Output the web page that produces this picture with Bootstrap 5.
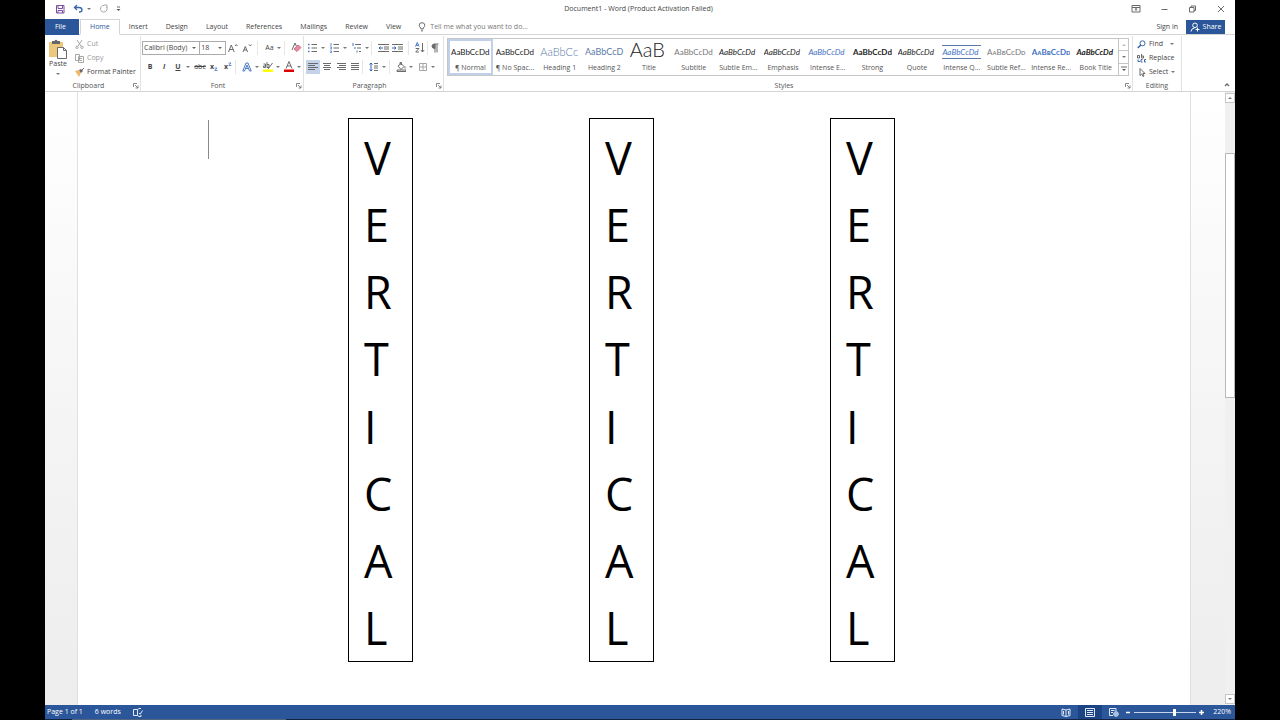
<!DOCTYPE html>
<html lang="en">
<head>
<meta charset="utf-8">
<meta name="viewport" content="width=device-width, initial-scale=1">
<title>Document1 - Word</title>
<link href="https://cdn.jsdelivr.net/npm/bootstrap@5.3.0/dist/css/bootstrap.min.css" rel="stylesheet">
<script src="https://cdn.jsdelivr.net/npm/bootstrap@5.3.0/dist/js/bootstrap.bundle.min.js"></script>
<style>
:root { --word: #2b579a; --line: #d4d4d4; --ink: #444; }
body { font: 7px/10px "Open Sans", "Noto Sans", sans-serif; color: var(--ink); background: #000; padding: 0 45px; }
button, select, input { font: inherit; color: inherit; }
button { border: 0; background: none; padding: 0; white-space: nowrap; display: inline-flex; align-items: center; }
svg { display: block; flex: none; fill: none; stroke: #6a6a6a; }
a { color: inherit; text-decoration: none; }
.s-purple { stroke: #7b4fa0; }
.s-blue { stroke: #3766ad; }
.s-sky { stroke: #4a7ac0; }
.s-pale { stroke: #a6a6a6; }
.app-window { background: #fff; }
.title-bar { height: 19px; padding: 0 9px 2px 10px; }
.title-side { flex: 1 1 0; }
.quick { gap: 8px; }
.win-controls { gap: 19px; }
.tab-row { height: 16px; border-bottom: 1px solid var(--line); }
.tab-row .ribbon-tab { padding: 0 9px; height: 16px; display: flex; align-items: center; }
.tab-row .file-tab { background: var(--word); color: #fff; width: 34px; padding: 0 3px 0 0; justify-content: center; margin-right: 1px; }
.tab-row .home-tab { color: var(--word); border: 1px solid var(--line); border-bottom-color: #fff; background: #fff; }
.tell { border: 0; outline: 0; padding: 0; width: 120px; height: 12px; background: none; }
.tell::placeholder { color: #777; opacity: 1; }
.share-btn { background: var(--word); color: #fff; height: 14px; width: 39px; justify-content: center; gap: 3px; margin-right: 10px; }
.share-btn svg { stroke: #fff; }
.ribbon { height: 57px; border-bottom: 1px solid var(--line); }
.tool-group { border-right: 1px solid #e2e2e2; margin-top: 1px; position: relative; }
.group-name { height: 10px; text-align: center; margin-top: auto; color: #555; }
.launcher { position: absolute; right: 1px; bottom: 2px; }
.clip-group { width: 96px; }
.font-group { width: 163px; }
.para-group { width: 140px; }
.edit-group { width: 49px; }
.ribbon-end { width: 53px; }
.stack { padding-top: 1px; }
.stack button { height: 14px; gap: 3px; }
.paste-btn { width: 26px; flex-direction: column; padding-top: 3px; }
.off { color: #999; }
.tool-rows { padding: 2px 0 0 2px; }
.tool-row { height: 19px; }
.tool-row button { width: 14px; height: 14px; justify-content: center; }
.tool-row .with-caret { width: 22px; justify-content: flex-start; padding-left: 2px; }
.tool-row .with-caret-s { width: 21px; justify-content: flex-start; padding-left: 2px; }
.with-caret > :first-child, .with-caret-s > :first-child { width: 10px; text-align: center; margin-right: 3px; }
.pressed { background: #c5d3ea; }
.caret-down { width: 0; height: 0; border: 2px solid transparent; border-top-color: #777; border-bottom: 0; flex: none; }
.rule { width: 1px; height: 14px; background: #e6e6e6; flex: none; }
.pick { appearance: none; border: 1px solid #ababab; border-radius: 0; height: 14px; padding: 0 0 0 1px; line-height: 10px;
  background: #fff url("data:image/svg+xml,%3Csvg xmlns='http://www.w3.org/2000/svg' width='4' height='2'%3E%3Cpath d='M0 0h4L2 2z' fill='%23666'/%3E%3C/svg%3E") no-repeat right 3px center; }
.pick-font { width: 59px; margin-left: -1px; }
.pick-size { width: 27px; margin-left: -1px; }
.gallery { border: 1px solid #c6c6c6; height: 38px; margin: 2px 3px 0; }
.style-item { flex: 1 1 0; min-width: 0; height: 36px; flex-direction: column; padding: 0 3px; }
.style-item.chosen { box-shadow: inset 0 0 0 2px #c0d0ea; }
.sample { font: 8px/26px Lato, sans-serif; height: 24px; width: 100%; overflow: hidden; text-align: left; color: #222; }
.style-item .caption { line-height: 10px; color: #555; }
.sample-h1 { font-size: 11px; color: #5b7aa8; font-weight: 300; }
.sample-h2 { font-size: 9px; color: #5b7aa8; }
.sample-title { font-size: 20px; line-height: 20px; font-weight: 300; overflow: visible; }
.ink-grey { color: #777; }
.ink-blue { color: #4472c4; }
.lined { height: 14px; line-height: 12px; margin: 6px 0 4px; border: solid #5b7aa8; border-width: 1px 0; }
.gallery-nav { width: 10px; border-left: 1px solid #c6c6c6; }
.gallery-nav button { flex: 1; justify-content: center; border-bottom: 1px solid #c6c6c6; }
.gallery-nav button:last-child { border-bottom: 0; }
.desk { background: linear-gradient(#fff, #f4f4f4 55%, #ededed); min-height: 0; }
.paper { margin-left: 32px; margin-right: 34px; background: #fff; border: solid #e0e0e0; border-width: 0 1px; padding: 26px 0 0 130px; }
.text-caret { width: 1px; height: 39px; margin-top: 2px; background: #888; }
.box-set { margin-left: 139px; gap: 176px; }
.tall-box { width: 65px; height: 544px; border: 1px solid #000; padding: 19px 0 13px 15px; font: 45px/40px "Open Sans", "Noto Sans", sans-serif; color: #000; }
.scroll-bar { width: 10px; background: #f0f0f0; padding: 1px 0; }
.scroll-bar button { height: 10px; border: 1px solid #c6c6c6; background: #fff; justify-content: center; }
.scroll-thumb { background: #fff; border: 1px solid #b8b8b8; flex: 244 0 0; }
.track-above { flex: 50 0 0; }
.track-below { flex: 297 0 0; }
.status-bar { height: 14px; background: var(--word); color: #fff; padding: 0 4px 0 2px; }
.status-bar svg { stroke: #dfe8f6; }
.view-btn { width: 24px; height: 14px; justify-content: center; }
.view-btn.pressed { background: #1c4484; }
.zoom-range { appearance: none; width: 62px; height: 9px; background: linear-gradient(#c9d6ea, #c9d6ea) center / 100% 1px no-repeat; margin: 0 3px; }
.zoom-range::-webkit-slider-thumb { appearance: none; width: 3px; height: 7px; background: #fff; border: 0; }
.task-edge { height: 1px; background: linear-gradient(90deg, #14233f 27px, #53647f 27px 241px, #14233f 241px); }
.up { transform: rotate(180deg); }
</style>
</head>
<body class="vh-100 overflow-hidden">
<div class="app-window d-flex flex-column h-100">

  <header class="title-bar d-flex align-items-center">
    <div class="title-side quick d-flex align-items-center">
      <button aria-label="Save"><svg class="s-purple" width="10" height="10"><path d="M1.5 1.5h7.5v7.500h-7.500zM3 1.500v3h4.500v-3M3 9V6.500h4.500V9"/></svg></button>
      <button aria-label="Undo"><svg class="s-blue" width="10" height="9" stroke-width="1.3"><path d="M4 1L1.500 3.500L4 6M1.500 3.500H6Q9 3.500 9 6Q9 8 6 8"/></svg><span class="caret-down ms-1"></span></button>
      <button aria-label="Repeat"><svg class="s-pale" width="9" height="9"><path d="M5 1.500A3.300 3.300 0 1 0 7.500 3M5 1h3v3"/></svg></button>
      <button aria-label="Customize"><svg width="5" height="6"><path d="M1 1h3"/><path d="M.5 3h4L2.500 5z" fill="#555" stroke="none"/></svg></button>
    </div>
    <div class="me-1">Document1 - Word (Product Activation Failed)</div>
    <div class="title-side win-controls d-flex align-items-center justify-content-end">
      <button aria-label="Ribbon options"><svg width="10" height="8"><path d="M1 .5h8v6.500H1zM1 2.500h8M5 6V3.500M3.800 4.500L5 3.500l1.200 1"/></svg></button>
      <button aria-label="Minimize"><svg width="9" height="8"><path d="M1.500 4.500h6"/></svg></button>
      <button aria-label="Restore"><svg width="9" height="8"><path d="M1.500 2.500h4.500v4.500h-4.500zM3 2.500V1h4.500v4.500H6"/></svg></button>
      <button aria-label="Close"><svg width="10" height="8"><path d="M2 1l6 6M8 1L2 7"/></svg></button>
    </div>
  </header>

  <nav class="tab-row d-flex align-items-center flex-shrink-0">
    <a href="#" class="ribbon-tab file-tab">File</a>
    <a href="#" class="ribbon-tab home-tab">Home</a>
    <a href="#" class="ribbon-tab">Insert</a>
    <a href="#" class="ribbon-tab">Design</a>
    <a href="#" class="ribbon-tab">Layout</a>
    <a href="#" class="ribbon-tab">References</a>
    <a href="#" class="ribbon-tab">Mailings</a>
    <a href="#" class="ribbon-tab">Review</a>
    <a href="#" class="ribbon-tab">View</a>
    <label class="d-flex align-items-center ms-2" for="tell"><svg class="me-1" width="8" height="10"><path d="M2.800 7V6Q1 4.700 1.200 3.300A2.800 2.600 0 0 1 6.800 3.300Q6.900 4.700 5.200 6V7zM3 8.800h2"/></svg></label>
    <input class="tell" id="tell" type="text" placeholder="Tell me what you want to do...">
    <a href="#" class="ms-auto me-2">Sign in</a>
    <button class="share-btn"><svg width="10" height="10"><circle cx="5" cy="3.300" r="2.300"/><path d="M1 9.500Q1.500 6 4.500 6M5.500 7.500h4M7.500 5.500v4"/></svg>Share</button>
  </nav>

  <section class="ribbon d-flex flex-shrink-0">
    <div class="tool-group clip-group d-flex flex-column">
      <div class="d-flex">
        <button class="paste-btn"><svg width="20" height="20" stroke="none"><path d="M1 3h14v15H1z" fill="#edc77c" stroke="none"/><path d="M4 5V2h2.500Q8 -.5 9.500 2H12v3z" fill="#666" stroke="none"/><path d="M9.500 8.500h6l3 3v8h-9z" fill="#fff"/><path d="M15.500 8.500v3h3"/></svg><span>Paste</span><span class="caret-down mt-1"></span></button>
        <div class="stack d-flex flex-column ms-1 align-items-start">
          <button class="off"><svg class="s-pale" width="9" height="9"><path d="M2 0l4 6M7 0L3 6"/><circle cx="2" cy="7.300" r="1.200"/><circle cx="7" cy="7.300" r="1.200"/></svg>Cut</button>
          <button class="off"><svg class="s-pale" width="9" height="9"><path d="M.5 .5h4v6h-4zM3.500 2.500h5v6h-5zM5 4.500h2M5 6.500h2"/></svg>Copy</button>
          <button><svg width="9" height="9"><path d="M0 3l4-1 2 3-2 4z" fill="#edb96a" stroke="none"/><path d="M4 2l2-1 2 2-2 2z" fill="#666" stroke="none"/><path d="M7 2l2-2"/></svg>Format Painter</button>
        </div>
      </div>
      <div class="group-name pe-2">Clipboard</div>
      <button class="launcher" aria-label="Clipboard options"><svg width="6" height="6"><path d="M.5 4V.5H4M2 2l3 3M5 2.500V5H2.500" stroke-width=".8"/></svg></button>
    </div>

    <div class="tool-group font-group d-flex flex-column">
      <div class="tool-rows">
        <div class="tool-row d-flex align-items-center">
          <select class="pick pick-font" aria-label="Font"><option>Calibri (Body)</option></select>
          <select class="pick pick-size" aria-label="Font size"><option>18</option></select>
          <button aria-label="Grow font"><svg width="11" height="10"><path d="M1.500 9L4.300 2 7.200 9M2.500 6.500h3.700M8 3l1.300-1.500L10.600 3"/></svg></button>
          <button aria-label="Shrink font"><svg width="11" height="10"><path d="M2 9l2.300-5.500L6.600 9M3 7h2.700M8 1.500L9.300 3l1.300-1.500"/></svg></button>
          <span class="rule mx-1"></span>
          <button class="with-caret" aria-label="Change case"><span>Aa</span><span class="caret-down"></span></button>
          <span class="rule me-1"></span>
          <button aria-label="Clear formatting"><svg width="11" height="11"><path d="M1 8L4 1l1.500 3.500"/><path d="M3 7l4-4 3 2.500-4 4z" fill="#e58ba2" stroke="#d5708a"/></svg></button>
        </div>
        <div class="tool-row d-flex align-items-center">
          <button class="fw-bold">B</button><button class="fst-italic fw-bold">I</button>
          <button class="with-caret text-decoration-underline fw-bold"><span>U</span><span class="caret-down"></span></button>
          <button class="text-decoration-line-through">abc</button>
          <button aria-label="Subscript"><b>x</b><svg width="4" height="10"><path d="M.5 6h2.500L.8 8.500H3.500" stroke="#4472c4" stroke-width=".8"/></svg></button>
          <button aria-label="Superscript"><b>x</b><svg width="4" height="10"><path d="M.5 1h2.500L.8 3.500H3.500" stroke="#4472c4" stroke-width=".8"/></svg></button>
          <span class="rule"></span>
          <button class="with-caret-s ms-1" aria-label="Text effects"><svg class="s-sky" width="10" height="10"><path d="M.8 9L4 1h2l3.200 8H7.500L5 3 2.500 9zM3.500 6.500h3"/></svg><span class="caret-down"></span></button>
          <button class="with-caret-s" aria-label="Highlight"><svg width="10" height="11"><path d="M0 8.500h10v2.500H0z" fill="#ff0" stroke="none"/><path d="M.5 3h2v3.500h-2V5h2M4 1v5.500h2V3.500H4M5 8L9.500 2"/></svg><span class="caret-down"></span></button>
          <button class="with-caret-s" aria-label="Font color"><svg width="10" height="11"><path d="M0 8.500h10v2.500H0z" fill="#e00000" stroke="none"/><path d="M2 7.500L5 .5l3 7M3 5h4"/></svg><span class="caret-down"></span></button>
        </div>
      </div>
      <div class="group-name pe-2">Font</div>
      <button class="launcher" aria-label="Font options"><svg width="6" height="6"><path d="M.5 4V.5H4M2 2l3 3M5 2.500V5H2.500" stroke-width=".8"/></svg></button>
    </div>

    <div class="tool-group para-group d-flex flex-column">
      <div class="tool-rows">
        <div class="tool-row d-flex align-items-center">
          <button class="with-caret" aria-label="Bullets"><svg width="10" height="10"><path d="M0 1.500h1.500M0 5h1.500M0 8.500h1.500" stroke="#4472c4" stroke-width="1.500"/><path d="M3.500 1.500H9M3.500 5H9M3.500 8.500H9"/></svg><span class="caret-down"></span></button>
          <button class="with-caret" aria-label="Numbering"><svg width="10" height="10"><path d="M1 0v3M0 4h1.500v1L.5 6H2M0 8h1.500v1.500H0" stroke="#4472c4" stroke-width=".8"/><path d="M3.500 1.500H9M3.500 5H9M3.500 8.500H9"/></svg><span class="caret-down"></span></button>
          <button class="with-caret-s" aria-label="Multilevel list"><svg width="10" height="10"><path d="M1 0v3M3 4v2M5 7.500v2" stroke="#4472c4"/><path d="M3 1.500h6M5 5h4M7 8.500h2"/></svg><span class="caret-down"></span></button>
          <span class="rule me-1"></span>
          <button aria-label="Decrease indent"><svg width="11" height="10"><path d="M0 1.500h11M6 4h5M6 6h5M0 8.500h11"/><path d="M5 5H1M2.500 3.500L1 5l1.500 1.500" stroke="#2f62b5"/></svg></button>
          <button aria-label="Increase indent"><svg width="11" height="10"><path d="M0 1.500h11M6 4h5M6 6h5M0 8.500h11"/><path d="M0 5h4M2.500 3.500L4 5 2.500 6.500" stroke="#2f62b5"/></svg></button>
          <span class="rule ms-1"></span>
          <button class="ms-1" aria-label="Sort"><svg width="10" height="11"><path d="M.5 4.500L2.300.5l1.800 4M1 3.300h2.500" stroke="#4472c4"/><path d="M.7 6.500H4L.7 10H4M7.500 1v9M5.800 8l1.700 2L9.200 8"/></svg></button>
          <span class="rule"></span>
          <button aria-label="Show marks"><svg width="8" height="10"><path d="M4 1.500v8M6 1.500v8M3.500 1h4"/><path d="M4 1Q1 1 1 3.200T4 5.500z" fill="#6a6a6a"/></svg></button>
        </div>
        <div class="tool-row d-flex align-items-center">
          <button class="pressed" aria-label="Align left"><svg width="10" height="9"><path d="M0 1.500h10M0 3.500h7M0 5.500h10M0 7.500h7"/></svg></button>
          <button aria-label="Center"><svg width="10" height="9"><path d="M1 1.500h8M2 3.500h6M1 5.500h8M2 7.500h6"/></svg></button>
          <button aria-label="Align right"><svg width="10" height="9"><path d="M1 1.500h9M3 3.500h7M1 5.500h9M3 7.500h7"/></svg></button>
          <button aria-label="Justify"><svg width="10" height="9"><path d="M1 1.500h8M1 3.500h8M1 5.500h8M1 7.500h8"/></svg></button>
          <span class="rule me-1"></span>
          <button class="with-caret" aria-label="Line spacing"><svg width="10" height="10"><path d="M2 1v8M.5 2.500L2 1l1.500 1.500M.5 7.500L2 9l1.500-1.500" stroke="#2f62b5"/><path d="M5 1.500h4M5 4h4M5 6h4M5 8.500h4"/></svg><span class="caret-down"></span></button>
          <span class="rule me-1"></span>
          <button class="with-caret" aria-label="Shading"><svg width="11" height="10"><path d="M2 4l3-2.500L8 4.500 5 7.500zM4 3V.5h1.500V3M9 4.500v2M1 8h9v1.500H1z"/></svg><span class="caret-down"></span></button>
          <button class="with-caret" aria-label="Borders"><svg class="s-pale" width="10" height="10"><path d="M1.500 1.500h7v7h-7zM5 1.500v7M1.500 5h7"/></svg><span class="caret-down"></span></button>
        </div>
      </div>
      <div class="group-name pe-2">Paragraph</div>
      <button class="launcher" aria-label="Paragraph options"><svg width="6" height="6"><path d="M.5 4V.5H4M2 2l3 3M5 2.500V5H2.500" stroke-width=".8"/></svg></button>
    </div>

    <div class="tool-group flex-fill d-flex flex-column">
      <div class="gallery d-flex">
        <button class="style-item chosen"><span class="sample">AaBbCcDd</span><span class="caption">¶ Normal</span></button>
        <button class="style-item"><span class="sample">AaBbCcDd</span><span class="caption">¶ No Spac...</span></button>
        <button class="style-item"><span class="sample sample-h1">AaBbCc</span><span class="caption">Heading 1</span></button>
        <button class="style-item"><span class="sample sample-h2">AaBbCcD</span><span class="caption">Heading 2</span></button>
        <button class="style-item"><span class="sample sample-title">AaB</span><span class="caption">Title</span></button>
        <button class="style-item"><span class="sample ink-grey">AaBbCcDd</span><span class="caption">Subtitle</span></button>
        <button class="style-item"><span class="sample fst-italic">AaBbCcDd</span><span class="caption">Subtle Em...</span></button>
        <button class="style-item"><span class="sample fst-italic">AaBbCcDd</span><span class="caption">Emphasis</span></button>
        <button class="style-item"><span class="sample fst-italic ink-blue">AaBbCcDd</span><span class="caption">Intense E...</span></button>
        <button class="style-item"><span class="sample fw-bold">AaBbCcDd</span><span class="caption">Strong</span></button>
        <button class="style-item"><span class="sample fst-italic">AaBbCcDd</span><span class="caption">Quote</span></button>
        <button class="style-item"><span class="sample fst-italic ink-blue lined">AaBbCcDd</span><span class="caption">Intense Q...</span></button>
        <button class="style-item"><span class="sample ink-grey">AᴀBʙCᴄDᴅ</span><span class="caption">Subtle Ref...</span></button>
        <button class="style-item"><span class="sample fw-bold ink-blue">AᴀBʙCᴄDᴅ</span><span class="caption">Intense Re...</span></button>
        <button class="style-item"><span class="sample fst-italic fw-bold">AaBbCcDd</span><span class="caption">Book Title</span></button>
        <div class="gallery-nav d-flex flex-column">
          <button aria-label="Scroll up"><span class="caret-down up opacity-50"></span></button>
          <button aria-label="Scroll down"><span class="caret-down"></span></button>
          <button aria-label="More styles"><svg width="6" height="6"><path d="M0 1h6"/><path d="M1 3h4L3 5z" fill="#555" stroke="none"/></svg></button>
        </div>
      </div>
      <div class="group-name pe-2">Styles</div>
      <button class="launcher" aria-label="Styles options"><svg width="6" height="6"><path d="M.5 4V.5H4M2 2l3 3M5 2.500V5H2.500" stroke-width=".8"/></svg></button>
    </div>

    <div class="tool-group edit-group d-flex flex-column">
      <div class="stack d-flex flex-column ps-1 align-items-start">
        <button><svg class="s-blue" width="9" height="9"><circle cx="5.500" cy="3.300" r="2.500"/><path d="M3.800 5L.8 8" stroke-width="1.500"/></svg>Find<span class="caret-down ms-1"></span></button>
        <button><svg width="9" height="9"><path d="M.5 1.500h2v2.500h-2zM4.500 0v4h2V2h-2"/><path d="M1 5.500v2h2M5.500 5.500H4v2.500h1.500M9 5.500H7.500v2.500H9" stroke="#3766ad"/></svg>Replace</button>
        <button><svg width="9" height="9"><path d="M3 .5v7l1.700-1.500L6 8.500l1-.5-1.200-2.500H8z"/></svg>Select<span class="caret-down"></span></button>
      </div>
      <div class="group-name">Editing</div>
    </div>
    <div class="ribbon-end d-flex justify-content-end align-items-end pb-1 pe-1">
      <button aria-label="Collapse ribbon"><svg width="8" height="5"><path d="M2 4l2-2 2 2" stroke-width="1.300"/></svg></button>
    </div>
  </section>

  <main class="desk d-flex flex-fill">
    <article class="paper flex-fill d-flex align-items-start">
      <span class="text-caret"></span>
      <div class="box-set d-flex">
        <div class="tall-box d-flex flex-column justify-content-between"><span>V</span><span>E</span><span>R</span><span>T</span><span>I</span><span>C</span><span>A</span><span>L</span></div>
        <div class="tall-box d-flex flex-column justify-content-between"><span>V</span><span>E</span><span>R</span><span>T</span><span>I</span><span>C</span><span>A</span><span>L</span></div>
        <div class="tall-box d-flex flex-column justify-content-between"><span>V</span><span>E</span><span>R</span><span>T</span><span>I</span><span>C</span><span>A</span><span>L</span></div>
      </div>
    </article>
    <aside class="scroll-bar d-flex flex-column">
      <button aria-label="Scroll up"><span class="caret-down up"></span></button>
      <div class="flex-fill d-flex flex-column">
        <div class="track-above"></div>
        <div class="scroll-thumb"></div>
        <div class="track-below"></div>
      </div>
      <button aria-label="Scroll down"><span class="caret-down"></span></button>
    </aside>
  </main>

  <footer class="status-bar d-flex align-items-center flex-shrink-0">
    <span>Page 1 of 1</span>
    <span class="ms-2 ps-1 me-2">6 words</span>
    <button class="ms-1" aria-label="Proofing"><svg width="10" height="9"><path d="M4.500 1.500h-4v6h4zM4.500 1.500L6 .5h2M4.500 7.500L6 8.500h2V7M6 5l1.200 1.200L9.500 2.500"/></svg></button>
    <button class="view-btn ms-auto" aria-label="Read mode"><svg width="10" height="9"><path d="M5 2v6.500M5 2L1 1v6.500l4 1 4-1V1zM2.500 3v3.500M7.500 3v3.500"/></svg></button>
    <button class="view-btn pressed" aria-label="Print layout"><svg width="10" height="9"><path d="M.5 .5h9v8h-9zM2 2.500h6M2 4.500h6M2 6.500h6"/></svg></button>
    <button class="view-btn" aria-label="Web layout"><svg width="10" height="9"><path d="M4 7.500H.5v-7h6.500V3M2 2.500h3.500M2 4.500h2"/><circle cx="7" cy="6" r="2.300"/><path d="M5 6h4M7 4v4"/></svg></button>
    <button aria-label="Zoom out"><svg width="5" height="7"><path d="M0 3.500h4" stroke="#fff" stroke-width="1.500"/></svg></button>
    <input class="zoom-range" type="range" min="0" max="100" value="66" aria-label="Zoom">
    <button aria-label="Zoom in"><svg width="6" height="7"><path d="M0 3.500h5M2.500 1v5" stroke="#fff" stroke-width="1.500"/></svg></button>
    <button class="ms-2">220%</button>
  </footer>
  <div class="task-edge flex-shrink-0"></div>
</div>
</body>
</html>
